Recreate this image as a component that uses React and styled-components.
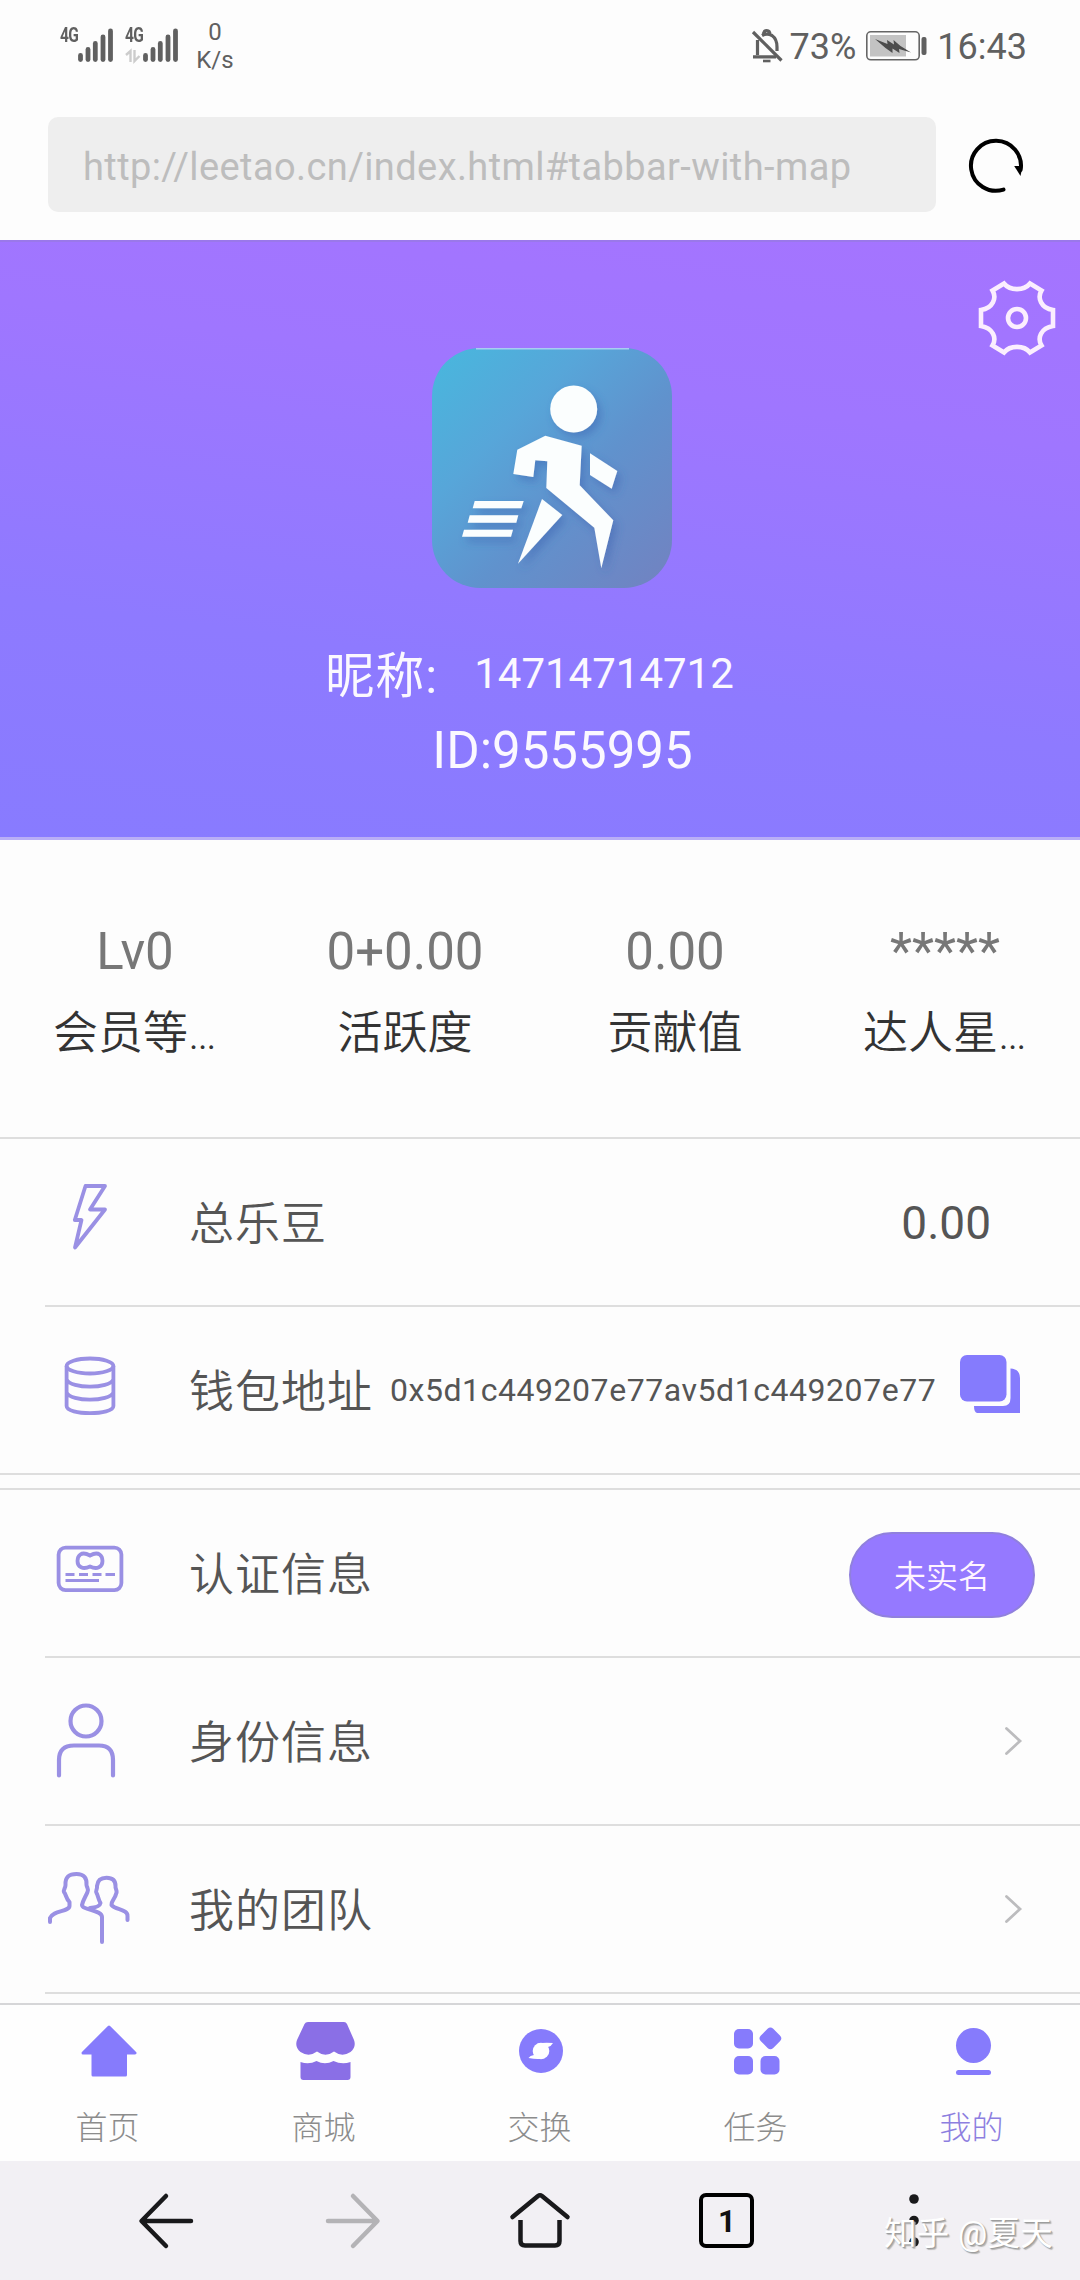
import React from 'react'
import styled, { createGlobalStyle } from 'styled-components';


const GlobalStyle = createGlobalStyle`
  * {
    box-sizing: border-box;
  }

  body {
    margin: 0;
    background: #fdfdfd;
    font-family: Roboto, "Noto Sans CJK SC", sans-serif;
    color: #555;
  }

  svg {
    display: block;
    flex: none;
    overflow: visible;
  }
`;

const barras = [[2.5, 25.5], [10, 19.5], [17.3, 13.5], [25, 7], [32.5, 1]];

const datos = [
  { valor: 'Lv0', nombre: '会员等…' },
  { valor: '0+0.00', nombre: '活跃度' },
  { valor: '0.00', nombre: '贡献值' },
  { valor: '*****', nombre: '达人星…' },
];

function Cobertura({ inactiva }) {
  return (
    <Red>
      <Tipo>
        <Texto4G>4G</Texto4G>
        {inactiva && (
          <svg width="16" height="12" viewBox="0 0 16 12" fill="none" stroke="#ccc" strokeWidth="2.4">
            <path d="M1 5 L5.5 1 V12 M9.5 0 V11 L14.5 6" />
          </svg>
        )}
      </Tipo>
      <svg width="35" height="34" viewBox="0 0 35 34" stroke="#606060" strokeWidth="4.8" strokeLinecap="round">
        {barras.map(([x, y]) => <path key={x} d={`M${x} ${y + 2} V31.5`} />)}
      </svg>
    </Red>
  )
}

function IconoCorredor() {
  return (
    <svg width="240" height="240" viewBox="0 0 240 240">
      <defs>
        <linearGradient id="fondo" x1="0" y1="0.1" x2="0.9" y2="1">
          <stop offset="0" stopColor="#4ab5dd" />
          <stop offset="0.3" stopColor="#57a6d9" />
          <stop offset="0.6" stopColor="#6092cd" />
          <stop offset="1" stopColor="#7084c2" />
        </linearGradient>
        <filter id="sombra" x="-20%" y="-20%" width="150%" height="150%">
          <feDropShadow dx="4" dy="5" stdDeviation="4" floodColor="#3e5fae" floodOpacity="0.45" />
        </filter>
      </defs>
      <rect width="240" height="240" rx="48" fill="url(#fondo)" />
      <path d="M44 0.7 H197" stroke="#a9cdf2" strokeWidth="1.6" />
      <g fill="#fbfefe" filter="url(#sombra)">
        <circle cx="141.7" cy="61" r="23.5" />
        <path d="M113.3 87.7 L149.7 97.7 L147.7 137.3 L181.3 172.3 L169.3 220.3 L162.3 179.7 L114.3 140 L115.3 113.3 L103.3 112.3 L101.3 129 L81.3 126 L85.3 101.7 Z" />
        <path d="M158 105.3 L185.3 123 L179.7 140.7 L158 127 Z" />
        <path d="M110 151 L130.3 167 L86 215.7 Z" />
        <path d="M42.7 153 H91.7 L89.3 160.3 H40.7 Z M37.7 167.3 H86.3 L84.3 174.7 H35.7 Z M32 181.7 H81 L79 188.7 H30 Z" />
      </g>
    </svg>
  )
}

function Flecha() {
  return (
    <svg width="16" height="28" viewBox="0 0 16 28" fill="none" stroke="#bcbcbe" strokeWidth="2.8" strokeLinecap="round">
      <path d="M1.5 1.5 L15 14 L1.5 26.5" />
    </svg>
  )
}

function App() {
  return (
    <Pantalla>
      <GlobalStyle />

      <BarraEstado>
        <Cobertura />
        <Cobertura inactiva />
        <Velocidad>
          <span>0</span>
          <span>K/s</span>
        </Velocidad>
        <Derecha>
          <svg width="30" height="34" viewBox="0 0 30 34" fill="none" stroke="#606060" strokeWidth="3.2">
            <path d="M5.5 11 V26 M1 27.8 H24 M10 6.5 Q15 3.6 20 6.5 Q25 10 25 18 V22 M11.5 6 Q11.5 1.5 14.8 1.5 Q18 1.5 18 6" />
            <path d="M1 3 L29.5 31.5" />
            <path d="M11 32 H18.5" strokeWidth="2.6" />
          </svg>
          <Porcentaje>73%</Porcentaje>
          <svg width="61" height="30" viewBox="0 0 61 30">
            <rect x="0.8" y="0.8" width="52.4" height="28" rx="4" fill="#fdfdfd" stroke="#666" strokeWidth="1.6" />
            <rect x="4" y="4" width="36" height="21.5" fill="#c3c3c3" />
            <path d="M9 8 L21.5 13 L21 9 L28 13.5 L27.5 9 L34.5 15 L45 21.5 L33 18 L33.5 22 L26.5 17.5 L26.5 22 L19.5 17 Z" fill="#4c4c4c" />
            <rect x="55.5" y="6" width="5" height="18" rx="2" fill="#606060" />
          </svg>
          <Hora>16:43</Hora>
        </Derecha>
      </BarraEstado>

      <BarraUrl>
        <Direccion>http://leetao.cn/index.html#tabbar-with-map</Direccion>
        <svg width="54" height="54" viewBox="0 0 54 54" fill="none">
          <path d="M34.5 50.6 A25 25 0 1 1 51.6 31" stroke="#000" strokeWidth="4" strokeLinecap="round" />
          <path d="M45.2 27 H53.5 L51.5 37 Z" fill="#000" />
        </svg>
      </BarraUrl>

      <Cabecera>
        <Ajustes>
          <svg width="76" height="74" viewBox="-38 -37 76 74" fill="none" stroke="#fbeefe" strokeWidth="4.6">
            <path d="M36 -8 V8 C24 10 20 20 24.5 27.5 L13 34.5 C7 27 -7 27 -13 34.5 L-24.5 27.5 C-20 20 -24 10 -36 8 V-8 C-24 -10 -20 -20 -24.5 -27.5 L-13 -34.5 C-7 -27 7 -27 13 -34.5 L24.5 -27.5 C20 -20 24 -10 36 -8 Z" />
            <circle r="9" />
          </svg>
        </Ajustes>
        <Avatar><IconoCorredor /></Avatar>
        <Apodo>
          <Etiqueta>昵称:</Etiqueta>
          <Telefono>14714714712</Telefono>
        </Apodo>
        <Identificador>ID:9555995</Identificador>
      </Cabecera>

      <Resumen>
        {datos.map((d) => (
          <Dato key={d.nombre}>
            <Valor>{d.valor}</Valor>
            <Nombre>{d.nombre}</Nombre>
          </Dato>
        ))}
      </Resumen>

      <Lista>
        <Fila>
          <Icono $x={28} $abajo={10}>
            <svg width="34" height="66" viewBox="0 0 34 66" fill="none" stroke="#9a90e4" strokeWidth="3.8" strokeLinejoin="round">
              <path d="M12.5 2 H32 L17 25.5 H32 L2 63.500 L8.5 36 H1.8 Z" />
            </svg>
          </Icono>
          <Titulo>总乐豆</Titulo>
          <Cantidad>0.00</Cantidad>
        </Fila>
        <Fila $completa>
          <Icono $x={20} $abajo={9}>
            <svg width="50" height="58" viewBox="0 0 50 58" fill="none" stroke="#9a90e4" strokeWidth="3.8">
              <ellipse cx="25" cy="9" rx="23.4" ry="7.5" />
              <path d="M1.6 9 V49 C1.6 58.5 48.4 58.5 48.4 49 V9 M1.6 22.5 C6 32 44 32 48.4 22.5 M1.6 35.5 C6 45 44 45 48.4 35.5" />
            </svg>
          </Icono>
          <Titulo>钱包地址</Titulo>
          <Cartera>0x5d1c449207e77av5d1c449207e77</Cartera>
          <Copiar>
            <svg width="60" height="58" viewBox="0 0 60 58" fill="#857bfd">
              <rect width="46.5" height="46.5" rx="7" />
              <path d="M50.5 13.5 Q60 14 60 23 V58 H17 Q14 57 14 51 H43 Q50.5 51 50.5 43 Z" />
            </svg>
          </Copiar>
        </Fila>
      </Lista>

      <Lista $separada>
        <Fila>
          <Icono $x={12} $abajo={9}>
            <svg width="66" height="46" viewBox="0 0 66 46" fill="none" stroke="#9a90e4" strokeWidth="3.8">
              <rect x="1.6" y="1.6" width="62.8" height="42.5" rx="7" />
              <path d="M33 9.5 C24 4.5 20.5 10 20.5 15 C20.5 21 26 24 33 20.5 C40 24 45.5 21 45.5 15 C45.5 10 42 4.5 33 9.5 Z" />
              <path d="M8.5 28.5 H17.5 M22 28.5 H31 M35.5 28.5 H44.5 M48.5 28.5 H58 M8.5 34.5 H42" strokeWidth="3" />
            </svg>
          </Icono>
          <Titulo>认证信息</Titulo>
          <Boton>未实名</Boton>
        </Fila>
        <Fila>
          <Icono $x={11} $abajo={0}>
            <svg width="60" height="76" viewBox="0 0 60 76" fill="none" stroke="#9a90e4" strokeWidth="4.2" strokeLinecap="round">
              <circle cx="30" cy="18" r="15.5" />
              <path d="M3 72.500 V57 Q3 42.5 18 42.5 H43 Q57 42.5 57 57 V72.500" />
            </svg>
          </Icono>
          <Titulo>身份信息</Titulo>
          <Extremo><Flecha /></Extremo>
        </Fila>
        <Fila>
          <Icono $x={3} $abajo={2}>
            <svg width="82" height="72" viewBox="0 0 82 72" fill="none" stroke="#9a90e4" strokeWidth="4" strokeLinecap="round" strokeLinejoin="round">
              <path d="M2 50 V46 C5 38 21 40 21.5 34 V30 C18 27 18 22 16 20 C15 18 17.5 16 17.5 13 C17 5 21 2 28.5 2 C36 2 39 6 38.5 13 C39 16 41 17 39.5 20 C38 24 35 28 34 33 C34 38 54 38 54 45 V70" />
              <path d="M42 36 C48 35.5 52 34 52.5 31 C50 27 50 23 48.5 21 C47 19 49.5 18 49 14 C49.5 8 53 5.7 58.5 5.7 C64 5.7 67.5 8 67.5 14 C67 17 70 19 68 22 C67 27 63.5 28 63.5 33 C67 38 80 37 79.5 44 V48" />
            </svg>
          </Icono>
          <Titulo>我的团队</Titulo>
          <Extremo><Flecha /></Extremo>
        </Fila>
      </Lista>

      <Pestanas>
        <Pestana>
          <Dibujo>
            <svg width="56" height="52" viewBox="0 0 56 52" fill="#867bfc" stroke="#867bfc" strokeWidth="3" strokeLinejoin="round">
              <path d="M28 2 L54 28 H44.500 V50 H12 V28 H2 Z" />
            </svg>
          </Dibujo>
          <Texto>首页</Texto>
        </Pestana>
        <Pestana>
          <Dibujo>
            <svg width="59" height="58" viewBox="0 0 59 58" fill="#8a6fe6">
              <path d="M12 0 H48 Q50 0 51 2 L58 18 Q60.5 25 54.5 30 Q46 35.5 38 29.5 Q29.5 36 21 29.5 Q13 35.5 4.5 30 Q-1.5 25 1 18 L8.5 2 Q9.5 0 12 0 Z" />
              <path d="M4.5 40 Q13 43 20.5 39 Q29 43.5 37.5 39 Q46 43 54.5 40 V55 Q54.5 58 51.5 58 H7.5 Q4.5 58 4.5 55 Z" />
            </svg>
          </Dibujo>
          <Texto>商城</Texto>
        </Pestana>
        <Pestana>
          <Dibujo>
            <svg width="44" height="44" viewBox="0 0 44 44">
              <circle cx="22" cy="22" r="22" fill="#867bfc" />
              <circle cx="22" cy="22" r="8.3" fill="#fff" />
              <path d="M18 15 Q24 13 34 14 Q32 17.5 29 18 L29 22 Z M26 29 Q20 31 9.5 29 Q11 26.5 15 26 L15 22 Z" fill="#fff" />
            </svg>
          </Dibujo>
          <Texto>交换</Texto>
        </Pestana>
        <Pestana>
          <Dibujo>
            <svg width="47" height="48" viewBox="0 0 47 48" fill="#867bfc">
              <rect y="2" width="19" height="19.5" rx="5" />
              <rect x="27.5" y="2.5" width="17.5" height="17.5" rx="4" transform="rotate(45 36.2 11.5)" />
              <rect y="29" width="19" height="18.5" rx="5" />
              <rect x="26.5" y="29" width="19" height="18.5" rx="5" />
            </svg>
          </Dibujo>
          <Texto>任务</Texto>
        </Pestana>
        <Pestana $activa>
          <Dibujo>
            <svg width="35" height="47" viewBox="0 0 35 47" fill="#867bfc">
              <circle cx="17.5" cy="17.5" r="17.5" />
              <rect y="42" width="35" height="5" rx="2.5" />
            </svg>
          </Dibujo>
          <Texto>我的</Texto>
        </Pestana>
      </Pestanas>

      <Navegador>
        <svg width="54" height="54" viewBox="0 0 54 54" fill="none" stroke="#19191b" strokeWidth="4.5" strokeLinecap="round" strokeLinejoin="round">
          <path d="M27 2 L2.5 27 L27 52 M3 27 H52" />
        </svg>
        <svg width="54" height="54" viewBox="0 0 54 54" fill="none" stroke="#b4b3b6" strokeWidth="4.5" strokeLinecap="round" strokeLinejoin="round">
          <path d="M27 2 L51.5 27 L27 52 M51 27 H2" />
        </svg>
        <svg width="60" height="55" viewBox="0 0 60 55" fill="none" stroke="#19191b" strokeWidth="4.5" strokeLinecap="round" strokeLinejoin="round">
          <path d="M2.5 24 L28 3 Q30 1.5 32 3 L57.5 24" />
          <path d="M10.5 27 V48 Q10.5 52.5 15 52.5 H45 Q49.5 52.5 49.5 48 V27" strokeLinecap="butt" />
        </svg>
        <Contador>1</Contador>
        <svg width="10" height="54" viewBox="0 0 10 54" fill="#19191b">
          <circle cx="5" cy="5" r="4.8" />
          <circle cx="5" cy="26.5" r="4.8" />
          <circle cx="5" cy="48" r="4.8" />
        </svg>
        <Marca>知乎 @夏天</Marca>
      </Navegador>
    </Pantalla>
  )
}

const Pantalla=styled.div`
    width: 1080px;
    height: 2280px;
    display: flex;
    flex-direction: column;
    overflow: hidden;
    background: #fdfdfd;
`;

const BarraEstado=styled.div`
    height: 92px;
    display: flex;
    align-items: center;
    padding: 0 53px 0 60px;
    color: #606060;
`;

const Red=styled.div`
    height: 34px;
    width: 53px;
    margin: 0 12px 3px 0;
    display: flex;
`;

const Tipo=styled.div`
    width: 18px;
    display: flex;
    flex-direction: column;
    gap: 7px;
    flex: none;
`;

const Texto4G=styled.span`
    font-size: 21px;
    line-height: 15px;
    font-weight: 700;
    letter-spacing: -1px;
    transform: scaleX(0.74);
    transform-origin: left;
`;

const Velocidad=styled.div`
    width: 46px;
    margin-left: 2px;
    display: flex;
    flex-direction: column;
    align-items: center;
    font-size: 24px;
    line-height: 28px;
`;

const Derecha=styled.div`
    margin-left: auto;
    display: flex;
    align-items: center;
    font-size: 36px;
    line-height: 40px;
`;

const Porcentaje=styled.span`
    margin: 2px 10px 0 8px;
`;

const Hora=styled.span`
    margin: 2px 0 0 10px;
`;

const BarraUrl=styled.div`
    height: 148px;
    display: flex;
    align-items: flex-start;
    gap: 33px;
    padding: 25px 48px 0;

    svg {
      margin-top: 22px;
    }
`;

const Direccion=styled.div`
    width: 888px;
    height: 95px;
    padding-left: 35px;
    border-radius: 10px;
    background: #eee;
    color: #bdbdbd;
    font-size: 38px;
    line-height: 100px;
    letter-spacing: 0.4px;
    white-space: nowrap;
`;

const Cabecera=styled.div`
    height: 600px;
    flex: none;
    display: flex;
    flex-direction: column;
    align-items: center;
    border-top: 2px solid #9a78ea;
    border-bottom: 3px solid #b9aef6;
    background: linear-gradient(188deg, #a574ff 0%, #9f76ff 28%, #8e7aff 68%, #887bff 100%);
    color: #fbf8ff;
`;

const Ajustes=styled.div`
    width: 100%;
    height: 106px;
    flex: none;
    padding: 39px 25px 0 0;
    display: flex;
    justify-content: flex-end;
    align-items: flex-start;
`;

const Avatar=styled.div`
    margin-left: 24px;
`;

const Apodo=styled.div`
    height: 60px;
    margin: 59px 0 0 -21px;
    display: flex;
    align-items: center;
`;

const Etiqueta=styled.span`
    width: 149px;
    font-size: 49px;
    line-height: 60px;
    letter-spacing: 1px;
`;

const Telefono=styled.span`
    font-size: 42px;
    line-height: 60px;
    margin-top: -6px;
`;

const Identificador=styled.div`
    margin: 14px 0 0 45px;
    font-size: 51px;
    line-height: 60px;
`;

const Resumen=styled.div`
    height: 297px;
    flex: none;
    display: grid;
    grid-template-columns: repeat(4, 1fr);
`;

const Dato=styled.div`
    display: flex;
    flex-direction: column;
    align-items: center;
    padding-top: 81px;
`;

const Valor=styled.div`
    color: #777;
    font-size: 51px;
    line-height: 62px;
`;

const Nombre=styled.div`
    margin-top: 21px;
    color: #333;
    font-size: 45px;
    line-height: 60px;
    font-weight: 350;
`;

const Lista=styled.div`
    flex: none;
    border-top: 2px solid #dedede;
    margin-top: ${({ $separada }) => ($separada ? '13px' : '0')};
`;

const Fila=styled.div`
    height: 168px;
    margin-left: ${({ $completa }) => ($completa ? '0' : '45px')};
    padding-left: ${({ $completa }) => ($completa ? '45px' : '0')};
    border-bottom: 2px solid #dedede;
    display: flex;
    align-items: center;
`;

const Icono=styled.div`
    width: 144px;
    flex: none;
    padding: 0 0 ${({ $abajo }) => $abajo}px ${({ $x }) => $x}px;
`;

const Titulo=styled.div`
    padding-top: 6px;
    font-size: 45px;
    line-height: 60px;
    letter-spacing: 1px;
    font-weight: 350;
    white-space: nowrap;
`;

const Cantidad=styled.div`
    margin-left: auto;
    padding: 1px 89px 0 0;
    font-size: 46px;
    line-height: 60px;
`;

const Cartera=styled.div`
    margin-left: 17px;
    font-size: 32px;
    line-height: 60px;
    letter-spacing: 0.55px;
`;

const Copiar=styled.div`
    margin-left: auto;
    padding: 0 60px 13px 0;
`;

const Boton=styled.button`
    width: 186px;
    height: 86px;
    margin: 4px 45px 0 auto;
    padding: 0 0 3px;
    border: solid 2px #9080dd;
    border-radius: 43px;
    background: #9579ff;
    color: #fff4ff;
    font-family: inherit;
    font-size: 32px;
    font-weight: 350;
`;

const Extremo=styled.div`
    margin-left: auto;
    padding-right: 59px;
`;

const Pestanas=styled.div`
    height: 158px;
    flex: none;
    margin-top: auto;
    border-top: 2px solid #d6d6d8;
    background: #fefefe;
    display: grid;
    grid-template-columns: repeat(5, 1fr);
`;

const Pestana=styled.div`
    display: flex;
    flex-direction: column;
    align-items: center;
    color: ${({ $activa }) => ($activa ? '#8d7fe0' : '#8c8c8c')};
    font-size: 32px;
    line-height: 40px;
    font-weight: 300;
`;

const Dibujo=styled.div`
    height: 92px;
    margin: 0 0 11px 2px;
    display: flex;
    align-items: center;
`;

const Texto=styled.span`
    margin-right: 1px;
`;

const Navegador=styled.div`
    height: 119px;
    flex: none;
    padding: 0 73px;
    position: relative;
    background: #f2f0f4;
    display: grid;
    grid-template-columns: repeat(5, 1fr);
    align-items: center;
    justify-items: center;
`;

const Contador=styled.div`
    width: 55px;
    height: 55px;
    border: solid 4.5px #000;
    border-radius: 7px;
    color: #111;
    font-size: 31px;
    line-height: 49px;
    font-weight: 700;
    text-align: center;
`;

const Marca=styled.div`
    position: absolute;
    right: 27px;
    bottom: 26px;
    color: #fff;
    font-size: 32.5px;
    line-height: 40px;
    letter-spacing: 0.3px;
    text-shadow: 1px 1px 1px #999, 2px 2px 1px #bbb;
    white-space: nowrap;
`;

export default App
